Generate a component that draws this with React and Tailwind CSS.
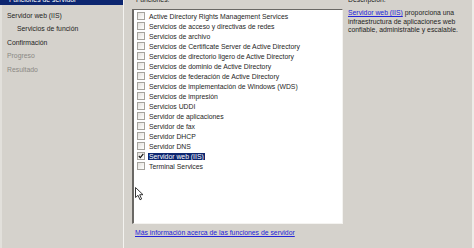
import React from 'react';

const roles = [
  'Active Directory Rights Management Services',
  'Servicios de acceso y directivas de redes',
  'Servicios de archivo',
  'Servicios de Certificate Server de Active Directory',
  'Servicios de directorio ligero de Active Directory',
  'Servicios de dominio de Active Directory',
  'Servicios de federación de Active Directory',
  'Servicios de implementación de Windows (WDS)',
  'Servicios de impresión',
  'Servicios UDDI',
  'Servidor de aplicaciones',
  'Servidor de fax',
  'Servidor DHCP',
  'Servidor DNS',
  'Servidor web (IIS)',
  'Terminal Services',
];

const steps = [
  { label: 'Servidor web (IIS)', indent: false, muted: false },
  { label: 'Servicios de función', indent: true, muted: false },
  { label: 'Confirmación', indent: false, muted: false },
  { label: 'Progreso', indent: false, muted: true },
  { label: 'Resultado', indent: false, muted: true },
];

const Checkbox = ({ checked }) => (
  <span className="w-[8px] h-[8px] shrink-0 border border-[#a5a39d] bg-gradient-to-br from-[#e4e2dc] to-white flex items-center justify-center">
    {checked && (
      <svg width="6" height="6" viewBox="0 0 6 6">
        <path d="M0.8 3 L2.3 4.6 L5.3 0.8" fill="none" stroke="#111" strokeWidth="1.1" />
      </svg>
    )}
  </span>
);

const Cursor = () => (
  <svg className="absolute left-[1px] top-[177px]" width="9" height="14" viewBox="0 0 9 14">
    <path d="M0.5 0.5 L0.5 10.5 L3 8.3 L5 12.8 L6.6 12 L4.7 7.7 L8 7.7 Z" fill="#fff" stroke="#222" strokeWidth="0.9" />
  </svg>
);

export default function App() {
  return (
    <div className="w-[474px] h-[248px] flex overflow-hidden bg-[#d5d2cc] text-[6.85px] text-[#1e1e1e] font-['Liberation_Sans',Arial,sans-serif]">
      {/* wizard steps */}
      <aside className="w-[123px] shrink-0 flex flex-col border-l-2 border-[#e2e0db]">
        <div className="h-[5px] -ml-[2px] bg-[#0d2670] overflow-hidden">
          <div className="-mt-[4px] pl-[9px] leading-[8px] text-white">Funciones de servidor</div>
        </div>
        <div className="flex flex-col pt-[7px]">
          {steps.map((s) => (
            <div
              key={s.label}
              className={`h-[13.4px] leading-[7px] ${s.indent ? 'pl-[15px]' : 'pl-[5px]'} ${s.muted ? 'text-[#8b8984]' : ''}`}
            >
              {s.label}
            </div>
          ))}
        </div>
      </aside>
      <div className="w-[1px] shrink-0 bg-[#f4f3f0]" />

      {/* role list */}
      <main className="w-[219px] shrink-0 flex flex-col pl-[8px]">
        <div className="h-[9px] overflow-hidden pl-[4px]">
          <div className="-mt-[4px] leading-[8px]">Funciones:</div>
        </div>
        <div className="relative h-[215px] bg-white border-t border-l-2 border-t-[#6a6864] border-l-[#6a6864] border-r border-b border-r-[#f4f3f0] border-b-[#f4f3f0] pt-[1px] pl-[3px]">
          {roles.map((r) => {
            const checked = r === 'Servidor web (IIS)';
            return (
              <div key={r} className="h-[10px] flex items-center gap-[3px]">
                <Checkbox checked={checked} />
                <span className={`px-[1px] leading-[7px] whitespace-nowrap ${checked ? 'bg-[#0d2670] text-white' : ''}`}>{r}</span>
              </div>
            );
          })}
          <Cursor />
        </div>
        <a className="mt-[5px] pl-[3px] leading-[8px] text-[#2323d8] underline whitespace-nowrap">
          Más información acerca de las funciones de servidor
        </a>
      </main>

      {/* description */}
      <section className="flex-1 flex flex-col pl-[5px] border-r-2 border-[#eeece8]">
        <div className="h-[9px] overflow-hidden">
          <div className="-mt-[4px] leading-[8px]">Descripción:</div>
        </div>
        <p className="leading-[8.5px] whitespace-nowrap">
          <a className="text-[#2323d8] underline">Servidor web (IIS)</a> proporciona una
          <br />
          infraestructura de aplicaciones web
          <br />
          confiable, administrable y escalable.
        </p>
      </section>
    </div>
  );
}
